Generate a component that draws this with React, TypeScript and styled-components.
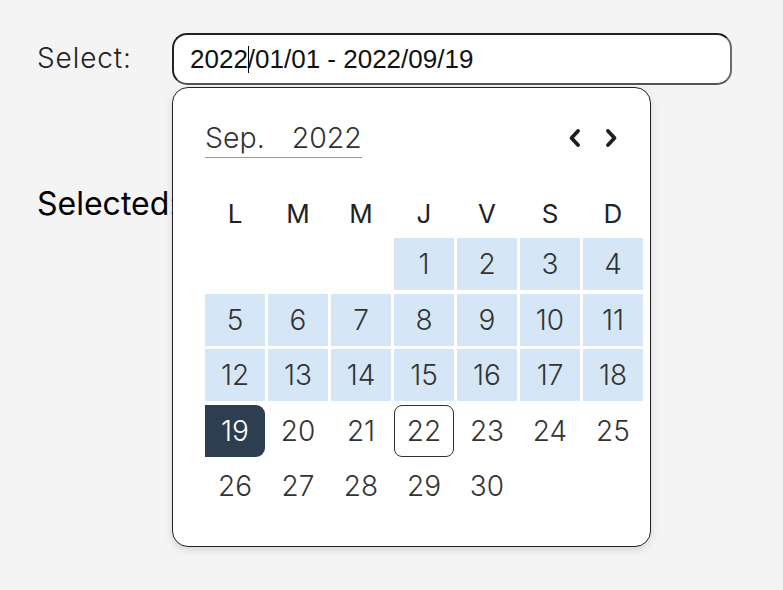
import React from 'react';
import styled, { createGlobalStyle } from 'styled-components';

const GlobalStyle = createGlobalStyle`
  html, body {
    margin: 0;
    padding: 0;
    background: #f4f4f4;
    font-family: Inter, "Noto Sans", sans-serif;
  }
`;

const Page = styled.div`
  box-sizing: border-box;
  min-height: 590px;
  padding: 33px 0 0 37px;
`;

const Row = styled.div`
  display: flex;
  align-items: center;
`;

const Label = styled.label`
  width: 135px;
  margin-top: -3px;
  font-size: 28px;
  font-weight: 300;
  letter-spacing: 0.9px;
  color: #222;
`;

const FieldWrap = styled.div`
  position: relative;
`;

const Field = styled.div`
  box-sizing: border-box;
  width: 560px;
  height: 52px;
  display: flex;
  align-items: center;
  padding: 0 16px;
  background: #fff;
  border: 2px solid #222;
  border-right-color: #6a6a6a;
  border-bottom-color: #555;
  border-radius: 15px;
  font-family: "Liberation Sans", Arial, sans-serif;
  font-size: 26px;
  color: #111;
`;

const Caret = styled.span`
  display: inline-block;
  width: 1px;
  height: 27px;
  margin: 0 -1px 0 0;
  background: #000;
`;

const Popup = styled.div`
  position: absolute;
  top: 54px;
  left: 0;
  width: 479px;
  box-sizing: border-box;
  padding: 30px 8px 34px 32px;
  background: #fff;
  border: 1px solid #222;
  border-radius: 16px;
  box-shadow: 0 3px 8px rgba(0, 0, 0, 0.12);
  z-index: 10;
`;

const Header = styled.div`
  display: flex;
  align-items: center;
  justify-content: space-between;
  height: 40px;
`;

const MonthYear = styled.div`
  display: flex;
  gap: 27px;
  margin-top: 2px;
  padding: 0 0 1px 0;
  border-bottom: 1px solid #9a9a9a;
  font-size: 28.5px;
  font-weight: 300;
  color: #333;
  line-height: 36px;
`;

const Nav = styled.div`
  display: flex;
  gap: 19px;
  margin: 0 22px 0 0;
`;

const NavButton = styled.button`
  border: none;
  background: none;
  padding: 0;
  width: 18px;
  height: 22px;
  display: flex;
  align-items: center;
  justify-content: center;
  cursor: pointer;
`;

const Weekdays = styled.div`
  display: grid;
  grid-template-columns: repeat(7, 60px);
  column-gap: 3px;
  margin-top: 36px;
  height: 38px;
  align-items: center;
`;

const Weekday = styled.div`
  text-align: center;
  font-size: 26px;
  font-weight: 400;
  color: #222;
`;

const Days = styled.div`
  display: grid;
  grid-template-columns: repeat(7, 60px);
  grid-auto-rows: 52px;
  column-gap: 3px;
  row-gap: 3.5px;
  margin-top: 6px;
`;

type Kind = 'plain' | 'range' | 'end' | 'today' | 'empty';

const Day = styled.div<{ $kind: Kind }>`
  box-sizing: border-box;
  display: flex;
  align-items: center;
  justify-content: center;
  font-size: 28px;
  font-weight: 300;
  color: ${(p) => (p.$kind === 'end' ? '#fff' : '#333')};
  background: ${(p) =>
    p.$kind === 'range' ? '#d5e7f6' : p.$kind === 'end' ? '#2c3e50' : 'transparent'};
  border: ${(p) => (p.$kind === 'today' ? '1px solid #333' : 'none')};
  border-radius: ${(p) =>
    p.$kind === 'end' ? '0 9px 9px 0' : p.$kind === 'today' ? '8px' : '0'};
`;

const Selected = styled.h2`
  margin: 99px 0 0;
  font-size: 32px;
  font-weight: 400;
  color: #000;
`;

const Chevron: React.FC<{ dir: 'left' | 'right' }> = ({ dir }) => (
  <svg width="15" height="20" viewBox="0 0 15 20">
    <path
      d={dir === 'left' ? 'M11 3 L4.5 10 L11 17' : 'M4 3 L10.5 10 L4 17'}
      fill="none"
      stroke="#1e1e1e"
      strokeWidth="3.8"
      strokeLinecap="round"
      strokeLinejoin="round"
    />
  </svg>
);

const weekdays = ['L', 'M', 'M', 'J', 'V', 'S', 'D'];

const cells: (number | null)[] = [null, null, null];
for (let d = 1; d <= 30; d++) cells.push(d);

const kindOf = (d: number | null): Kind => {
  if (d === null) return 'empty';
  if (d < 19) return 'range';
  if (d === 19) return 'end';
  if (d === 22) return 'today';
  return 'plain';
};

export default function App() {
  return (
    <>
      <GlobalStyle />
      <Page>
        <Row>
          <Label>Select:</Label>
          <FieldWrap>
            <Field>
              2022<Caret />/01/01 - 2022/09/19
            </Field>
            <Popup>
              <Header>
                <MonthYear>
                  <span>Sep.</span>
                  <span>2022</span>
                </MonthYear>
                <Nav>
                  <NavButton aria-label="Previous month">
                    <Chevron dir="left" />
                  </NavButton>
                  <NavButton aria-label="Next month">
                    <Chevron dir="right" />
                  </NavButton>
                </Nav>
              </Header>
              <Weekdays>
                {weekdays.map((w, i) => (
                  <Weekday key={i}>{w}</Weekday>
                ))}
              </Weekdays>
              <Days>
                {cells.map((d, i) => (
                  <Day key={i} $kind={kindOf(d)}>
                    {d}
                  </Day>
                ))}
              </Days>
            </Popup>
          </FieldWrap>
        </Row>
        <Selected>Selected:</Selected>
      </Page>
    </>
  );
}
